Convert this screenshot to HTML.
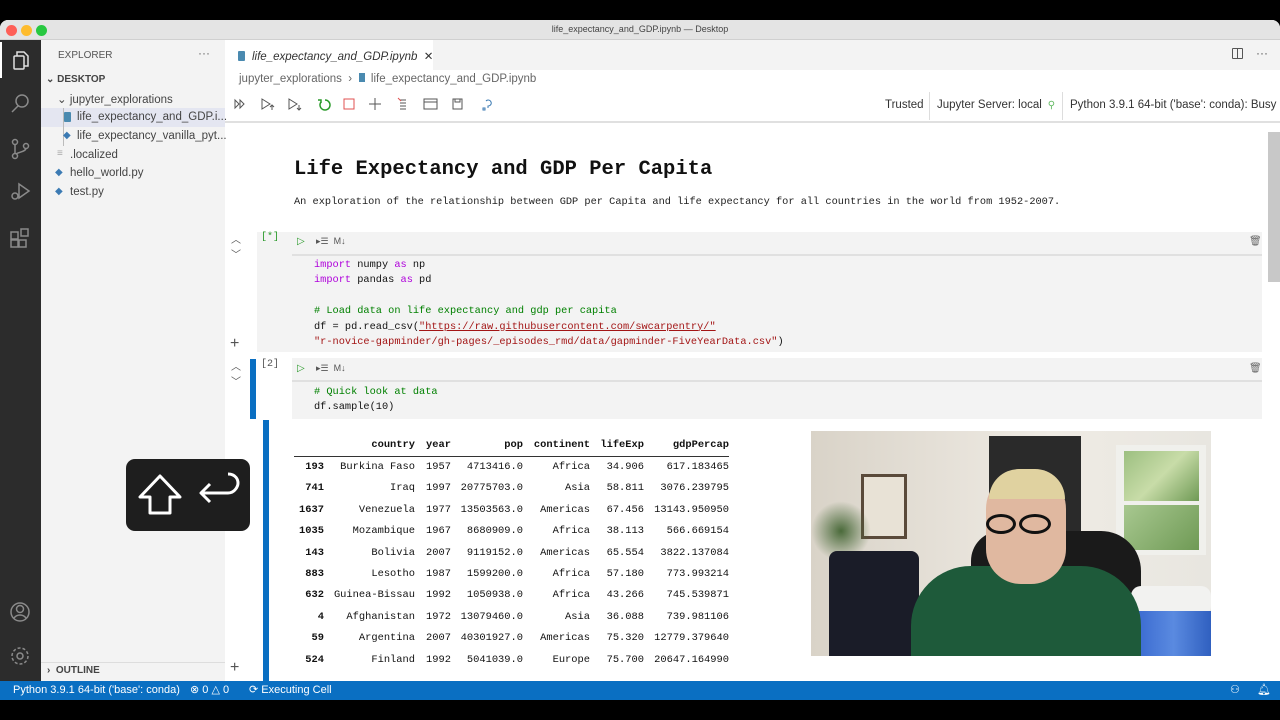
<!DOCTYPE html>
<html><head><meta charset="utf-8"><style>
*{margin:0;padding:0;box-sizing:border-box}
body{width:1280px;height:720px;background:#000;position:relative;overflow:hidden;font-family:"Liberation Sans",sans-serif;font-size:12px;color:#333}
.a{position:absolute}
.mono{font-family:"Liberation Mono","DejaVu Sans Mono",monospace}
.kw{color:#af00db}.cm{color:#008000}.st{color:#a31515}
table{border-collapse:collapse;table-layout:fixed}
td,th{text-align:right;padding:0;height:21.4px;white-space:nowrap}
th{font-weight:bold}
td:first-child{font-weight:bold}
</style></head><body>
<div class="a" style="left:0;top:20px;width:1280px;height:680px;background:#fff;border-radius:8px 8px 0 0;overflow:hidden">
 <div class="a" style="left:0;top:0;width:1280px;height:20px;background:#e4e4e4;border-bottom:1px solid #d0d0d0"></div>
 <div class="a" style="left:6px;top:5px;width:11px;height:11px;border-radius:50%;background:#fe5f57"></div>
 <div class="a" style="left:21px;top:5px;width:11px;height:11px;border-radius:50%;background:#febc2e"></div>
 <div class="a" style="left:36px;top:5px;width:11px;height:11px;border-radius:50%;background:#28c840"></div>
 <div class="a" style="left:0;top:4px;width:1280px;text-align:center;font-size:9px;color:#444">life_expectancy_and_GDP.ipynb — Desktop</div>
 <div class="a" style="left:0;top:20px;width:41px;height:641px;background:#2c2c2c"></div>
 <div class="a" style="left:0;top:22px;width:2px;height:36px;background:#fff"></div>
 <svg class="a" style="left:0;top:0" width="41" height="661" fill="none" stroke="#8a8a8a" stroke-width="1.5">
  <g stroke="#e0e0e0"><rect x="14" y="36" width="10" height="13" rx="1"/><path d="M17 36v-4h7l4 4v10h-4"/></g>
  <circle cx="22" cy="81" r="6"/><path d="M18 86l-6 6"/>
  <circle cx="15" cy="122" r="2.5"/><circle cx="15" cy="136" r="2.5"/><circle cx="26" cy="126" r="2.5"/><path d="M15 124v10M26 128c0 4-8 4-10 6"/>
  <path d="M19 164l10 7-10 7z"/><circle cx="15" cy="176" r="3"/>
  <rect x="11" y="212" width="7" height="7"/><rect x="11" y="220" width="7" height="7"/><rect x="19" y="220" width="7" height="7"/><rect x="21" y="209" width="7" height="7"/>
  <circle cx="20" cy="592" r="9"/><circle cx="20" cy="589" r="3.5"/><path d="M14 598c3-4 9-4 12 0"/>
  <circle cx="20" cy="636" r="3"/><circle cx="20" cy="636" r="8" stroke-dasharray="3 2"/>
 </svg>
 <div class="a" style="left:41px;top:20px;width:184px;height:641px;background:#f3f3f3"></div>
 <div class="a" style="left:58px;top:30px;font-size:10px;color:#555">EXPLORER</div>
 <div class="a" style="left:198px;top:26px;font-size:12px;color:#666">···</div>
 <div class="a" style="left:46px;top:54px;font-size:10px;font-weight:bold;color:#444">⌄ DESKTOP</div>
 <div class="a" style="left:57px;top:72px;font-size:11.5px;color:#444">⌄ jupyter_explorations</div>
 <div class="a" style="left:41px;top:88px;width:184px;height:19px;background:#e4e6f1"></div>
 <div class="a" style="left:63px;top:88px;width:1px;height:38px;background:#bbb"></div>
 <div class="a" style="left:64px;top:92px;width:7px;height:10px;background:#4a8ab0;border-radius:1px"></div>
 <div class="a" style="left:77px;top:91px;font-size:11.5px;color:#444">life_expectancy_and_GDP.i...</div>
 <div class="a" style="left:63px;top:110px;color:#3b7ab3;font-size:10px">◆</div>
 <div class="a" style="left:77px;top:110px;font-size:11.5px;color:#444">life_expectancy_vanilla_pyt...</div>
 <div class="a" style="left:57px;top:128px;font-size:10px;color:#aaa">≡</div>
 <div class="a" style="left:70px;top:129px;font-size:11.5px;color:#444">.localized</div>
 <div class="a" style="left:55px;top:147px;color:#3b7ab3;font-size:10px">◆</div>
 <div class="a" style="left:70px;top:147px;font-size:11.5px;color:#444">hello_world.py</div>
 <div class="a" style="left:55px;top:166px;color:#3b7ab3;font-size:10px">◆</div>
 <div class="a" style="left:70px;top:166px;font-size:11.5px;color:#444">test.py</div>
 <div class="a" style="left:41px;top:642px;width:184px;height:1px;background:#ddd"></div>
 <div class="a" style="left:47px;top:645px;font-size:10px;font-weight:bold;color:#444">›&nbsp; OUTLINE</div>
 <div class="a" style="left:225px;top:20px;width:1055px;height:30px;background:#f3f3f3"></div>
 <div class="a" style="left:225px;top:20px;width:208px;height:30px;background:#fff"></div>
 <div class="a" style="left:238px;top:31px;width:7px;height:10px;background:#4a8ab0;border-radius:1px"></div>
 <div class="a" style="left:252px;top:29px;font-size:11.5px;font-style:italic;color:#333">life_expectancy_and_GDP.ipynb&nbsp; <span style="font-style:normal">✕</span></div>
 <div class="a" style="left:1232px;top:28px;width:11px;height:11px;border:1px solid #555;border-radius:1px"></div>
 <div class="a" style="left:1237px;top:28px;width:1px;height:11px;background:#555"></div>
 <div class="a" style="left:1256px;top:26px;font-size:12px;color:#555">···</div>
 <div class="a" style="left:239px;top:53px;font-size:11.5px;color:#666">jupyter_explorations &nbsp;›&nbsp; <span style="display:inline-block;width:6px;height:9px;background:#4a8ab0"></span>&nbsp; life_expectancy_and_GDP.ipynb</div>
 <svg class="a" style="left:230px;top:76px" width="270" height="18" fill="none" stroke="#555" stroke-width="1">
  <path d="M5 4l4 4-4 4zM10 4l4 4-4 4z"/>
  <path d="M32 3l8 5-8 5z"/><path d="M42 9v5M40 11l2-2 2 2"/>
  <path d="M59 3l8 5-8 5z"/><path d="M69 9v5M67 12l2 2 2-2"/>
  <path d="M95 4a5 5 0 1 1-4 2M88 4h3v3" stroke="#2a9a2a" stroke-width="1.5"/>
  <rect x="114" y="3" width="10" height="10" stroke="#e05050"/>
  <path d="M145 2v12M139 8h12"/>
  <path d="M170 4h6M170 7h6M170 10h6M170 13h6" /><path d="M168 2l3 3" stroke="#e05050"/>
  <rect x="194" y="3" width="13" height="10"/><path d="M194 6h13"/>
  <rect x="223" y="3" width="9" height="10"/><rect x="225" y="3" width="5" height="3"/>
  <path d="M253 12h2v2h-2zM256 5a3 3 0 1 1 2 5v2" stroke="#3b7ab3"/>
 </svg>
 <div class="a" style="left:885px;top:79px;font-size:11.5px;color:#333">Trusted</div>
 <div class="a" style="left:929px;top:72px;width:1px;height:28px;background:#ddd"></div>
 <div class="a" style="left:937px;top:79px;font-size:11.5px;color:#333">Jupyter Server: local <span style="color:#6b6;font-size:10px">&nbsp;⚲</span></div>
 <div class="a" style="left:1062px;top:72px;width:1px;height:28px;background:#ddd"></div>
 <div class="a" style="left:1070px;top:79px;font-size:11.5px;color:#333">Python 3.9.1 64-bit ('base': conda): Busy</div>
 <div class="a" style="left:225px;top:101px;width:1055px;height:2px;background:#e0e0e0"></div>
 <div class="a" style="left:1268px;top:112px;width:12px;height:150px;background:#c8c8c8"></div>
 <div class="a mono" style="left:294px;top:138px;font-size:20.5px;font-weight:bold;color:#111">Life Expectancy and GDP Per Capita</div>
 <div class="a mono" style="left:294px;top:176px;font-size:10.3px;color:#222">An exploration of the relationship between GDP per Capita and life expectancy for all countries in the world from 1952-2007.</div>
 <div class="a" style="left:257px;top:212px;width:1005px;height:120px;background:#f3f3f3"></div>
 <div class="a" style="left:292px;top:234px;width:970px;height:2px;background:#e0e0e0"></div>
 <div class="a mono" style="left:261px;top:212px;font-size:10px;color:#2a9a2a">[*]</div>
 <div class="a" style="left:231px;top:213px;font-size:10px;color:#555;line-height:15px">︿<br>﹀</div>
 <div class="a" style="left:230px;top:315px;font-size:16px;color:#555">+</div>
 <div class="a" style="left:297px;top:216px;font-size:10px;color:#2a9a2a">▷</div>
 <div class="a" style="left:316px;top:216px;font-size:9px;color:#555">▸☰ &nbsp;M↓</div>
 <div class="a" style="left:1249px;top:216px;font-size:10px;color:#666">🗑</div>
 <div class="a mono" style="left:314px;top:238px;font-size:10.3px;line-height:15.4px;color:#111;white-space:pre"><span class="kw">import</span> numpy <span class="kw">as</span> np
<span class="kw">import</span> pandas <span class="kw">as</span> pd

<span class="cm"># Load data on life expectancy and gdp per capita</span>
df = pd.read_csv(<span class="st" style="text-decoration:underline">"https://raw.githubusercontent.com/swcarpentry/"</span>
<span class="st">"r-novice-gapminder/gh-pages/_episodes_rmd/data/gapminder-FiveYearData.csv"</span>)</div>
 <div class="a" style="left:250px;top:339px;width:6px;height:60px;background:#0a6fc2"></div>
 <div class="a" style="left:292px;top:338px;width:970px;height:61px;background:#f3f3f3"></div>
 <div class="a" style="left:292px;top:360px;width:970px;height:2px;background:#e0e0e0"></div>
 <div class="a mono" style="left:261px;top:339px;font-size:10px;color:#555">[2]</div>
 <div class="a" style="left:231px;top:340px;font-size:10px;color:#555;line-height:15px">︿<br>﹀</div>
 <div class="a" style="left:297px;top:343px;font-size:10px;color:#2a9a2a">▷</div>
 <div class="a" style="left:316px;top:343px;font-size:9px;color:#555">▸☰ &nbsp;M↓</div>
 <div class="a" style="left:1249px;top:343px;font-size:10px;color:#666">🗑</div>
 <div class="a mono" style="left:314px;top:365px;font-size:10.3px;line-height:15.4px;color:#111;white-space:pre"><span class="cm"># Quick look at data</span>
df.sample(10)</div>
 <div class="a" style="left:263px;top:400px;width:6px;height:261px;background:#0a6fc2"></div>
 <div class="a" style="left:230px;top:639px;font-size:16px;color:#555">+</div>
 <table class="a mono" style="left:294px;top:415px;font-size:10.4px;color:#111">
  <colgroup><col style="width:30px"><col style="width:91px"><col style="width:36px"><col style="width:72px"><col style="width:67px"><col style="width:54px"><col style="width:85px"></colgroup>
  <tr style="border-bottom:1px solid #333"><th></th><th>country</th><th>year</th><th>pop</th><th>continent</th><th>lifeExp</th><th>gdpPercap</th></tr>
  <tr><td>193</td><td>Burkina Faso</td><td>1957</td><td>4713416.0</td><td>Africa</td><td>34.906</td><td>617.183465</td></tr>
  <tr><td>741</td><td>Iraq</td><td>1997</td><td>20775703.0</td><td>Asia</td><td>58.811</td><td>3076.239795</td></tr>
  <tr><td>1637</td><td>Venezuela</td><td>1977</td><td>13503563.0</td><td>Americas</td><td>67.456</td><td>13143.950950</td></tr>
  <tr><td>1035</td><td>Mozambique</td><td>1967</td><td>8680909.0</td><td>Africa</td><td>38.113</td><td>566.669154</td></tr>
  <tr><td>143</td><td>Bolivia</td><td>2007</td><td>9119152.0</td><td>Americas</td><td>65.554</td><td>3822.137084</td></tr>
  <tr><td>883</td><td>Lesotho</td><td>1987</td><td>1599200.0</td><td>Africa</td><td>57.180</td><td>773.993214</td></tr>
  <tr><td>632</td><td>Guinea-Bissau</td><td>1992</td><td>1050938.0</td><td>Africa</td><td>43.266</td><td>745.539871</td></tr>
  <tr><td>4</td><td>Afghanistan</td><td>1972</td><td>13079460.0</td><td>Asia</td><td>36.088</td><td>739.981106</td></tr>
  <tr><td>59</td><td>Argentina</td><td>2007</td><td>40301927.0</td><td>Americas</td><td>75.320</td><td>12779.379640</td></tr>
  <tr><td>524</td><td>Finland</td><td>1992</td><td>5041039.0</td><td>Europe</td><td>75.700</td><td>20647.164990</td></tr>
 </table>
 <div class="a" style="left:811px;top:411px;width:400px;height:225px;background:#e6e2da;overflow:hidden">
  <div class="a" style="left:0;top:0;width:400px;height:225px;background:linear-gradient(90deg,#d9d3c8,#efebe4 60%,#e8e6e0)"></div>
  <div class="a" style="left:50px;top:43px;width:46px;height:65px;border:3px solid #5a4a3a;background:#e8e2d6"></div>
  <div class="a" style="left:178px;top:5px;width:92px;height:115px;background:#2a2a2a"></div>
  <div class="a" style="left:305px;top:14px;width:90px;height:110px;background:#f0f0ec"></div>
  <div class="a" style="left:313px;top:20px;width:75px;height:50px;background:linear-gradient(135deg,#9cbf80,#c8dca8,#6f9a55)"></div>
  <div class="a" style="left:313px;top:74px;width:75px;height:45px;background:linear-gradient(135deg,#a8c890,#6f9a55)"></div>
  <div class="a" style="left:0;top:70px;width:60px;height:60px;background:radial-gradient(#4a6a3a,transparent 70%)"></div>
  <div class="a" style="left:18px;top:120px;width:90px;height:110px;background:#1a1c28;border-radius:8px 8px 0 0"></div>
  <div class="a" style="left:160px;top:100px;width:170px;height:130px;background:#1a1a1a;border-radius:30px 40px 0 0"></div>
  <div class="a" style="left:320px;top:155px;width:80px;height:30px;background:#f2f2f0;border-radius:10px"></div>
  <div class="a" style="left:325px;top:180px;width:75px;height:45px;background:linear-gradient(90deg,#3a6ad0,#5a8ae0,#3060c0)"></div>
  <div class="a" style="left:100px;top:135px;width:230px;height:100px;background:#1e5a3a;border-radius:60px 60px 0 0"></div>
  <div class="a" style="left:175px;top:38px;width:80px;height:115px;background:#e0b8a0;border-radius:40px 40px 35px 35px"></div>
  <div class="a" style="left:178px;top:38px;width:76px;height:30px;background:#e0d2a0;border-radius:40px 40px 0 0"></div>
  <div class="a" style="left:175px;top:83px;width:30px;height:20px;border:3px solid #111;border-radius:50%"></div>
  <div class="a" style="left:208px;top:83px;width:32px;height:20px;border:3px solid #111;border-radius:50%"></div>
 </div>
 <div class="a" style="left:126px;top:439px;width:124px;height:72px;background:#1e1e1e;border-radius:9px"></div>
 <svg class="a" style="left:126px;top:439px" width="124" height="72" fill="none" stroke="#fff" stroke-width="3" stroke-linejoin="round">
  <path d="M34 17L14 38h10v16h20V38h10z"/>
  <path d="M102 15c8 0 10 6 10 9s-3 10-10 10H76M84 25l-9 9 9 9"/>
 </svg>
 <div class="a" style="left:0;top:661px;width:1280px;height:19px;background:#0a6fc2;color:#fff;font-size:11px;line-height:19px">
  <span class="a" style="left:13px">Python 3.9.1 64-bit ('base': conda)</span>
  <span class="a" style="left:190px">⊗ 0 △ 0</span>
  <span class="a" style="left:249px">⟳ Executing Cell</span>
  <span class="a" style="left:1230px">⚇</span><span class="a" style="left:1257px">🔔︎</span>
 </div>
</div>
</body></html>
